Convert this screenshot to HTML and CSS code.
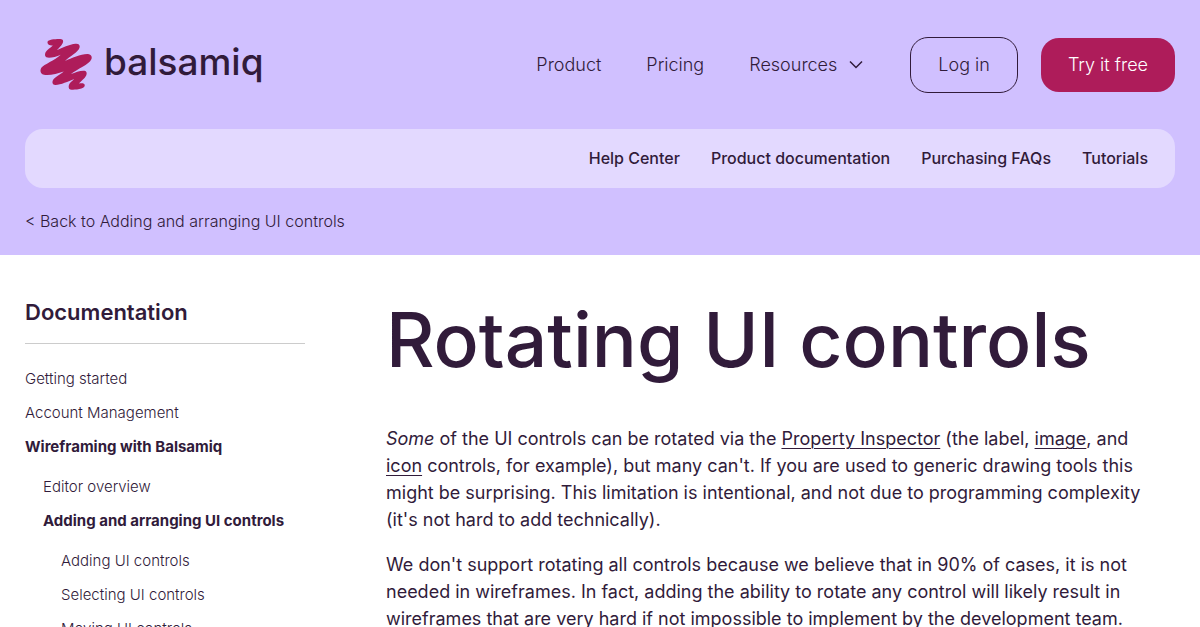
FILE: index.html
```html
<!DOCTYPE html>
<html lang="en">
<head>
<meta charset="utf-8">
<meta name="viewport" content="width=device-width, initial-scale=1">
<title>Rotating UI controls | Balsamiq</title>
<link rel="stylesheet" href="styles.css">
</head>
<body>
<header class="site-header">
  <div class="topbar">
    <a class="logo" href="#" aria-label="Balsamiq home">
      <svg class="logo-mark" viewBox="14 19 158 158" aria-hidden="true"><path d="M37 29C39 21 70 20 79 21C86 22 85 30 82 35C78 42 71 48 65 55C82 47 103 37 122 35C133 34 136 40 134 47C130 61 104 73 90 87C111 78 139 65 160 66C170 67 173 74 170 82C164 98 126 112 108 127C122 122 136 116 149 117C157 118 157 126 154 132C149 142 139 147 132 156C140 155 150 154 150 162C150 173 119 175 110 175C100 175 99 164 104 156C108 150 113 148 118 142C99 149 78 160 61 160C51 160 50 151 54 144C60 135 75 129 86 119C67 126 42 132 26 129C15 127 13 116 18 108C26 97 59 85 77 68C64 74 48 78 37 77C28 76 28 68 31 61C35 53 46 47 53 40C44 41 35 38 37 29Z"/></svg>
      <span class="wordmark">balsamiq</span>
    </a>
    <nav class="main-nav" aria-label="Main">
      <a href="#">Product</a>
      <a href="#">Pricing</a>
      <button class="nav-menu" type="button">Resources
        <svg class="chevron" viewBox="0 0 14 9" aria-hidden="true"><path d="M1 1.500L7 7.500L13 1.500"/></svg>
      </button>
    </nav>
    <div class="actions">
      <a class="btn btn-outline" href="#">Log in</a>
      <a class="btn btn-primary" href="#">Try it free</a>
    </div>
  </div>
  <nav class="subnav" aria-label="Support">
    <a href="#">Help Center</a>
    <a href="#">Product documentation</a>
    <a href="#">Purchasing FAQs</a>
    <a href="#">Tutorials</a>
  </nav>
  <a class="back" href="#">&lt; Back to Adding and arranging UI controls</a>
</header>
<div class="page">
  <aside class="sidebar">
    <h2>Documentation</h2>
    <ul>
      <li><a href="#">Getting started</a></li>
      <li><a href="#">Account Management</a></li>
      <li><a class="current" href="#">Wireframing with Balsamiq</a>
        <ul>
          <li><a href="#">Editor overview</a></li>
          <li><a class="current" href="#">Adding and arranging UI controls</a>
            <ul>
              <li><a href="#">Adding UI controls</a></li>
              <li><a href="#">Selecting UI controls</a></li>
              <li><a href="#">Moving UI controls</a></li>
            </ul>
          </li>
        </ul>
      </li>
    </ul>
  </aside>
  <main class="article">
    <h1>Rotating UI controls</h1>
    <p><em>Some</em> of the UI controls can be rotated via the <a href="#">Property Inspector</a> (the label, <a href="#">image</a>, and <a href="#">icon</a> controls, for example), but many can't. If you are used to generic drawing tools this might be surprising. This limitation is intentional, and not due to programming complexity (it's not hard to add technically).</p>
    <p>We don't support rotating all controls because we believe that in 90% of cases, it is not needed in wireframes. In fact, adding the ability to rotate any control will likely result in wireframes that are very hard if not impossible to implement by the development team.</p>
  </main>
</div>
</body>
</html>
```
FILE: styles.css
```css
* { box-sizing: border-box; }
html, body { height: 100%; }
body {
  margin: 0;
  overflow: hidden;
  background: #fff;
  color: #311b3a;
  font-family: Inter, "Liberation Sans", sans-serif;
  font-size: 18px;
  font-weight: 300;
  line-height: 27px;
}
a { color: inherit; text-decoration: none; }
.site-header { background: #d0c0ff; padding: 37px 25px 20px; }
.topbar { display: flex; align-items: center; height: 56px; }
.logo { display: flex; align-items: center; gap: 12px; margin-left: 15px; margin-right: auto; padding-bottom: 2px; }
.logo-mark { width: 52px; height: 53px; fill: #ae1c5a; }
.wordmark { padding-bottom: 4px; font-size: 37px; font-weight: 500; line-height: 46px; }
.main-nav { display: flex; align-items: center; gap: 45px; margin-right: 47px; padding-bottom: 2px; }
.nav-menu {
  display: flex; align-items: center; gap: 12px;
  padding: 0; border: 0; background: none;
  color: inherit; font: inherit;
}
.chevron { width: 14px; height: 9px; fill: none; stroke: #311b3a; stroke-width: 1.5; }
.actions { display: flex; align-items: center; gap: 23px; }
.btn { display: flex; align-items: center; justify-content: center; height: 54px; padding: 0 27px 2px; border-radius: 18px; }
.btn-outline { height: 56px; border: 1px solid #311b3a; }
.btn-primary { background: #ae1c5a; color: #fff; }
.subnav {
  display: flex; justify-content: flex-end; align-items: center; gap: 31px;
  height: 59px; margin: 36px 0 20px; padding: 0 27px;
  border-radius: 18px; background: #e3d9ff;
  font-size: 16px; font-weight: 500;
}
.back { display: block; font-size: 16px; }
.page { display: grid; grid-template-columns: 280px 1fr; gap: 81px; padding: 40px 25px; }
.sidebar { font-size: 15px; line-height: 22px; }
.sidebar h2 { margin: 0 0 24px; padding: 2px 0 15px; border-bottom: 1px solid #ccc; font-size: 22px; font-weight: 600; line-height: 31px; }
.sidebar ul { display: flex; flex-direction: column; gap: 12px; list-style: none; margin: 0; padding: 0; }
.sidebar ul ul { margin-top: 18px; padding-left: 18px; }
.sidebar .current { font-weight: 700; }
.article { max-width: 766px; }
.article h1 { margin: 0 0 40px; font-size: 75px; font-weight: 500; line-height: 90px; }
.article p { margin: 0 0 18px; font-weight: 400; }
.article p a { text-decoration: underline; text-underline-offset: 3px; text-decoration-thickness: 1px; }
```
